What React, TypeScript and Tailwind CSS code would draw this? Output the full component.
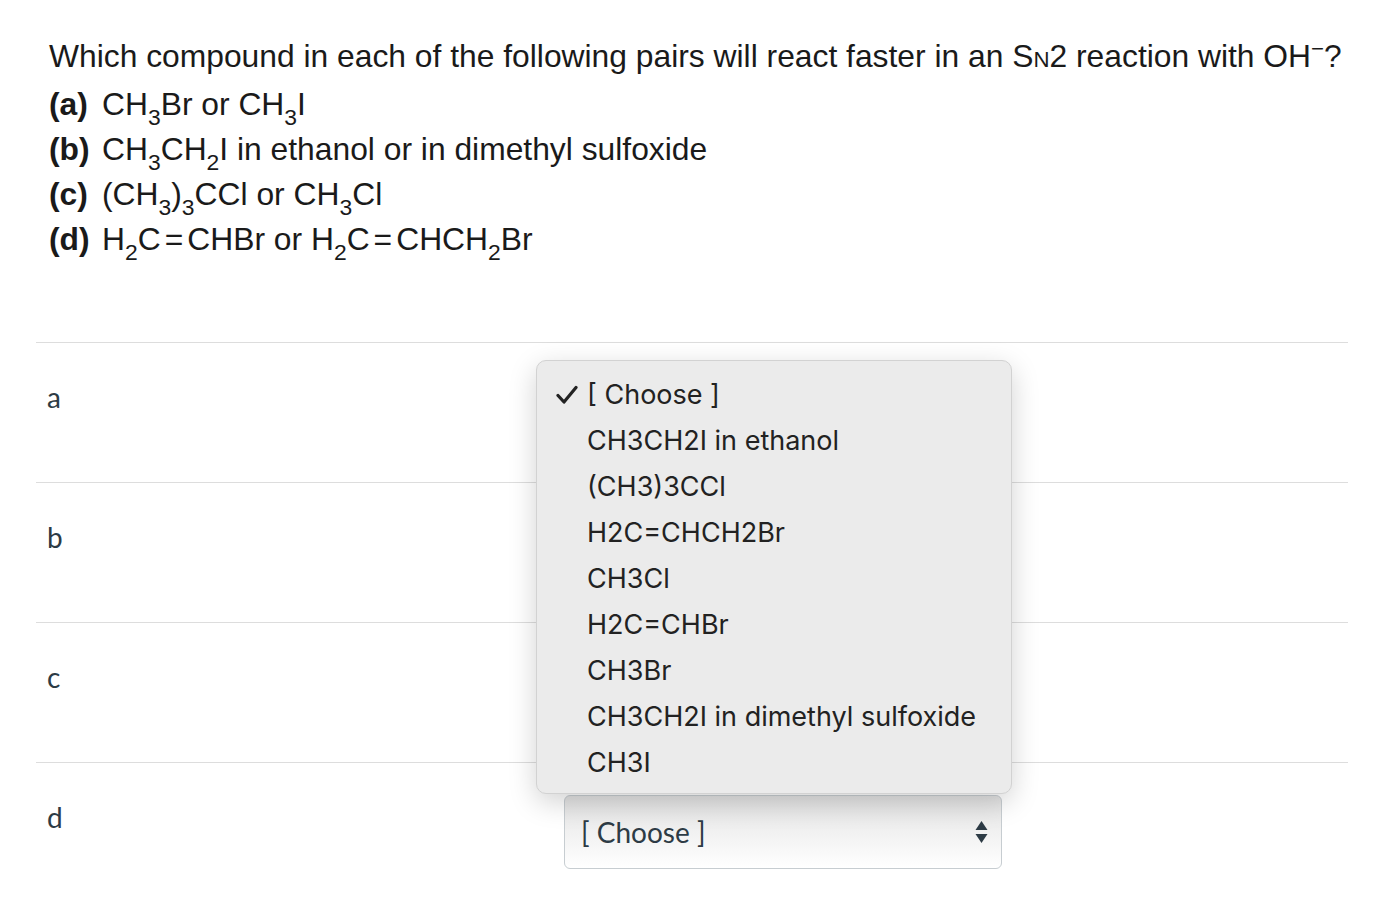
import React from "react"

const options = [
  "[ Choose ]",
  "CH3CH2I in ethanol",
  "(CH3)3CCl",
  "H2C=CHCH2Br",
  "CH3Cl",
  "H2C=CHBr",
  "CH3Br",
  "CH3CH2I in dimethyl sulfoxide",
  "CH3I",
]

function Sub({ children }: { children: React.ReactNode }) {
  return <sub className="text-[0.72em] relative top-[0.1em] align-sub leading-none">{children}</sub>
}

function Part({ label, children }: { label: string; children: React.ReactNode }) {
  return (
    <div className="flex items-baseline">
      <span className="w-[53px] font-bold">{label}</span>
      <span>{children}</span>
    </div>
  )
}

function Question() {
  return (
    <div className="pl-[49px] pt-[34px] text-[31.8px] leading-[45px] text-[#1a1a1a] font-['Liberation_Sans',Arial,sans-serif]">
      <div>
        Which compound in each of the following pairs will react faster in an S<span className="text-[0.7em]">N</span>2 reaction with OH
        <sup className="text-[0.7em] leading-none">−</sup>?
      </div>
      <Part label="(a)">
        CH<Sub>3</Sub>Br or CH<Sub>3</Sub>I
      </Part>
      <Part label="(b)">
        CH<Sub>3</Sub>CH<Sub>2</Sub>I in ethanol or in dimethyl sulfoxide
      </Part>
      <Part label="(c)">
        (CH<Sub>3</Sub>)<Sub>3</Sub>CCl or CH<Sub>3</Sub>Cl
      </Part>
      <Part label="(d)">
        H<Sub>2</Sub>C<span className="px-[4px]">=</span>CHBr or H<Sub>2</Sub>C<span className="px-[4px]">=</span>CHCH<Sub>2</Sub>Br
      </Part>
    </div>
  )
}

function SelectBox({ hidden }: { hidden?: boolean }) {
  return (
    <div
      className={`w-[438px] h-[74px] rounded-[6px] border border-[#c7cdd1] bg-gradient-to-b from-[#e3e3e3] to-white flex items-center justify-between pl-[16px] pr-[13px] ${
        hidden ? "invisible" : ""
      }`}
    >
      <span className="text-[28px] text-[#2d3b45] font-['Lato',sans-serif]">[ Choose ]</span>
      <svg width="13" height="26" viewBox="0 0 13 26">
        <path d="M6.5 2 L12.5 11 L0.5 11 Z" fill="#2d3b45" />
        <path d="M0.5 15 L12.5 15 L6.5 24 Z" fill="#2d3b45" />
      </svg>
    </div>
  )
}

function Row({ label, covered }: { label: string; covered?: boolean }) {
  return (
    <div className="h-[140px] border-t border-[#dddddd] flex">
      <div className="w-[528px] pl-[11px] pt-[33px] text-[28px] text-[#2d3b45] font-['Lato',sans-serif]">{label}</div>
      <div className="pt-[32px]">
        <SelectBox hidden={covered} />
      </div>
    </div>
  )
}

export default function App() {
  return (
    <div className="w-[1384px] h-[904px] bg-white relative overflow-hidden">
      <Question />
      <div className="mx-[36px] mt-[80px]">
        <Row label="a" covered />
        <Row label="b" covered />
        <Row label="c" covered />
        <Row label="d" />
      </div>

      {/* open native select menu */}
      <div className="absolute left-[536px] top-[360px] w-[476px] h-[434px] rounded-[10px] bg-[#ebebeb] border border-[#d2d2d2] shadow-[0_8px_28px_rgba(0,0,0,0.18)] pt-[11px] font-['Inter',sans-serif] text-[27px] text-[#222222]">
        {options.map((o, i) => (
          <div key={o} className="h-[46px] flex items-center relative pl-[50px]">
            {i === 0 && (
              <svg className="absolute left-[19px]" width="22" height="20" viewBox="0 0 22 20">
                <path d="M2 10.5 L8 17 L20 2.5" fill="none" stroke="#222" strokeWidth="3.2" strokeLinecap="round" strokeLinejoin="round" />
              </svg>
            )}
            {o}
          </div>
        ))}
      </div>
    </div>
  )
}
